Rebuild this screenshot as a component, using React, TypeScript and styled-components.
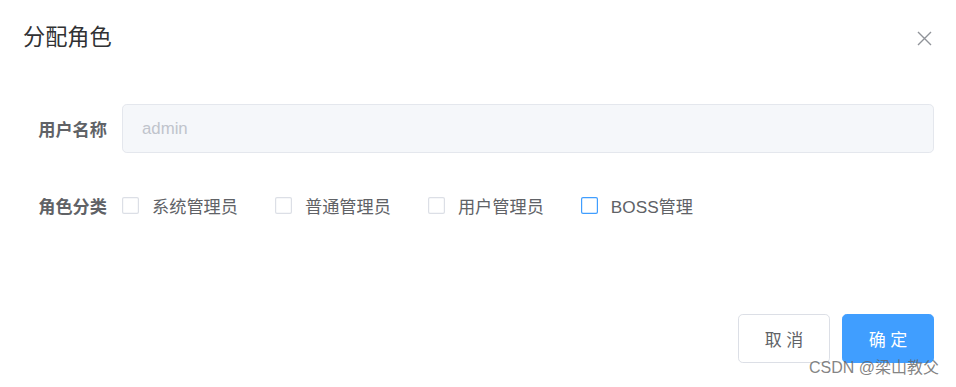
import React from "react";
import styled, { createGlobalStyle } from "styled-components";

const GlobalStyle = createGlobalStyle`
  html, body {
    margin: 0;
    padding: 0;
    background: #fff;
  }
  body {
    font-family: "Liberation Sans", "Noto Sans CJK SC", sans-serif;
  }
`;

const Dialog = styled.div`
  position: relative;
  width: 956px;
  height: 387px;
  background: #fff;
  display: flex;
  flex-direction: column;
  box-sizing: border-box;
  overflow: hidden;
`;

const Header = styled.div`
  height: 76px;
  padding: 0 24px 0 23px;
  display: flex;
  align-items: center;
  justify-content: space-between;
`;

const Title = styled.span`
  font-size: 22.2px;
  color: #303133;
  line-height: 1;
`;

const CloseButton = styled.button`
  border: none;
  background: transparent;
  padding: 0;
  width: 16px;
  height: 16px;
  display: flex;
  align-items: center;
  justify-content: center;
  cursor: pointer;
`;

const Form = styled.div`
  padding: 28px 22px 0 0;
  display: flex;
  flex-direction: column;
  gap: 28px;
`;

const Row = styled.div`
  display: flex;
  align-items: center;
  height: 49px;
`;

const Label = styled.label`
  width: 122px;
  box-sizing: border-box;
  padding-right: 15px;
  text-align: right;
  font-size: 17.2px;
  font-weight: 700;
  color: #606266;
`;

const Input = styled.input`
  flex: 1;
  height: 49px;
  box-sizing: border-box;
  border: 1px solid #e4e7ed;
  border-radius: 4.8px;
  background: #f5f7fa;
  padding: 0 19px;
  font-family: inherit;
  font-size: 16.8px;
  color: #c0c4cc;
  outline: none;
  &::placeholder {
    color: #c0c4cc;
  }
`;

const Group = styled.div`
  display: flex;
  align-items: center;
`;

const CheckItem = styled.div`
  display: flex;
  align-items: center;
  margin-right: 37px;
  cursor: pointer;
`;

const Box = styled.span<{ $hover?: boolean }>`
  display: block;
  width: 17px;
  height: 17px;
  border-radius: 2px;
  background: #fff;
  box-shadow: inset 0 0 0 1.2px ${({ $hover }) => ($hover ? "#409eff" : "#dcdfe6")};
`;

const CheckText = styled.span`
  padding-left: 13px;
  font-size: 17.2px;
  color: #606266;
  white-space: nowrap;
`;

const Footer = styled.div`
  margin-top: auto;
  padding: 0 22px 24px 0;
  display: flex;
  justify-content: flex-end;
  gap: 12px;
`;

const Button = styled.button<{ $primary?: boolean }>`
  width: 92px;
  height: 49px;
  box-sizing: border-box;
  border-radius: 4.8px;
  border: 1px solid ${({ $primary }) => ($primary ? "#409eff" : "#dcdfe6")};
  background: ${({ $primary }) => ($primary ? "#409eff" : "#fff")};
  color: ${({ $primary }) => ($primary ? "#fff" : "#606266")};
  font-family: inherit;
  font-size: 17px;
  cursor: pointer;
  white-space: pre;
`;

const Watermark = styled.span`
  position: absolute;
  right: 17px;
  bottom: 9px;
  font-size: 16px;
  color: rgba(100, 100, 100, 0.8);
  white-space: nowrap;
  pointer-events: none;
`;

const roles = ["系统管理员", "普通管理员", "用户管理员", "BOSS管理"];

export default function App() {
  return (
    <>
      <GlobalStyle />
      <Dialog>
        <Header>
          <Title>分配角色</Title>
          <CloseButton aria-label="close">
            <svg width="15" height="15" viewBox="0 0 15 15">
              <path d="M1 1 L14 14 M14 1 L1 14" stroke="#909399" strokeWidth="1.4" fill="none" />
            </svg>
          </CloseButton>
        </Header>
        <Form>
          <Row>
            <Label>用户名称</Label>
            <Input disabled placeholder="admin" />
          </Row>
          <Row>
            <Label>角色分类</Label>
            <Group>
              {roles.map((r, i) => (
                <CheckItem key={r}>
                  <Box $hover={i === 3} />
                  <CheckText>{r}</CheckText>
                </CheckItem>
              ))}
            </Group>
          </Row>
        </Form>
        <Footer>
          <Button>取 消</Button>
          <Button $primary>确 定</Button>
        </Footer>
        <Watermark>CSDN @梁山教父</Watermark>
      </Dialog>
    </>
  );
}
